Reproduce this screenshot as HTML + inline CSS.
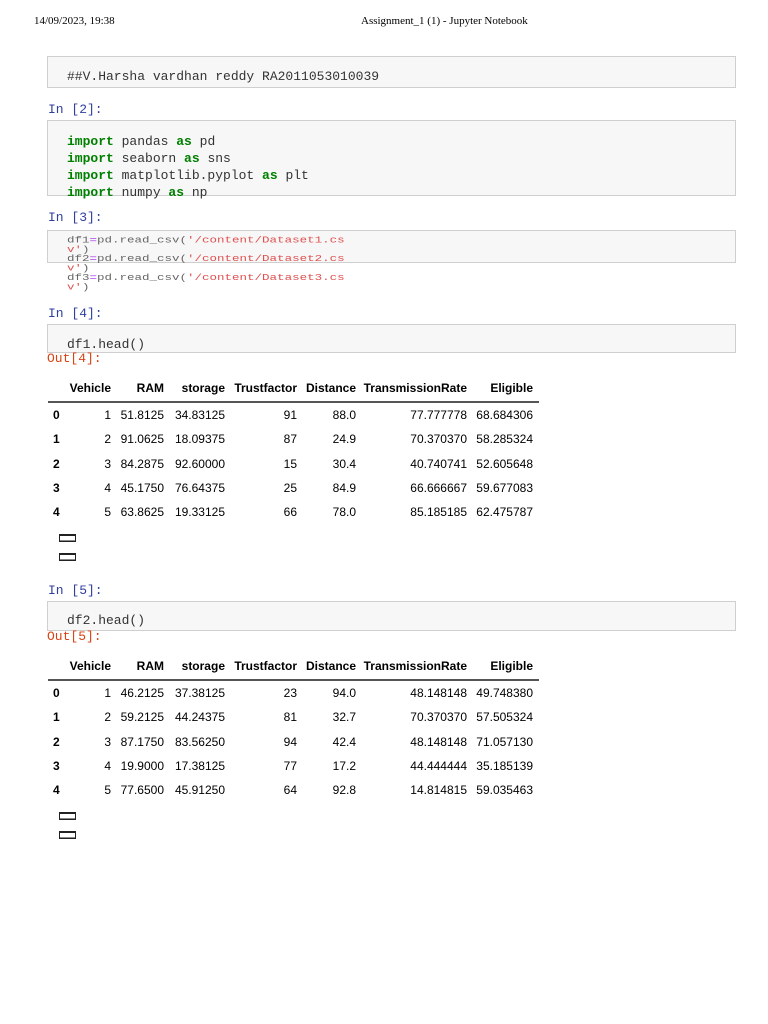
<!DOCTYPE html>
<html><head><meta charset="utf-8"><style>
body{margin:0;width:768px;height:1024px;background:#fff;position:relative;overflow:hidden;font-family:"Liberation Mono",monospace}
.a{position:absolute;white-space:pre}
.box{position:absolute;left:47px;width:689px;background:#f7f7f7;border:1px solid #cfcfcf;box-sizing:border-box}
.code{font-size:13px;color:#333}
.k{color:#008000;font-weight:bold}
.in{color:#303f9f;font-size:13px}
.out{color:#d84315;font-size:13px}
.t{font-family:"Liberation Sans",sans-serif;font-size:12px;color:#000;position:absolute;white-space:nowrap;text-align:right}
.h{font-weight:bold}
.ic{position:absolute;left:59px;width:15px;height:5px;border:1px solid #222;background:#fff;border-top-width:2px;box-shadow:inset 0 -1px 0 #888}
.sm{font-size:12.5px;color:#666}
.s{color:#e05050}
</style></head><body>
<div class="a" style="left:34px;top:15px;font-family:'Liberation Serif',serif;font-size:11px">14/09/2023, 19:38</div>
<div class="a" style="left:361px;top:15px;font-family:'Liberation Serif',serif;font-size:11px">Assignment_1 (1) - Jupyter Notebook</div>

<div class="box" style="top:56px;height:32px"></div>
<div class="a code" style="left:67px;top:69px">##V.Harsha vardhan reddy RA2011053010039</div>

<div class="a in" style="left:48px;top:102px">In [2]:</div>
<div class="box" style="top:120px;height:76px"></div>
<div class="a code" style="left:67px;top:133px;line-height:17px"><span class="k">import</span> pandas <span class="k">as</span> pd
<span class="k">import</span> seaborn <span class="k">as</span> sns
<span class="k">import</span> matplotlib.pyplot <span class="k">as</span> plt
<span class="k">import</span> numpy <span class="k">as</span> np</div>

<div class="a in" style="left:48px;top:210px">In [3]:</div>
<div class="box" style="top:230px;height:33px"></div>
<div class="a code sm" style="left:67px;top:236px;line-height:9.4px;transform:scaleY(0.72);transform-origin:0 0;line-height:13px">df1<span style="color:#a020f0">=</span>pd.read_csv(<span class="s">'/content/Dataset1.cs</span>
<span class="s">v'</span>)
df2<span style="color:#a020f0">=</span>pd.read_csv(<span class="s">'/content/Dataset2.cs</span>
<span class="s">v'</span>)
df3<span style="color:#a020f0">=</span>pd.read_csv(<span class="s">'/content/Dataset3.cs</span>
<span class="s">v'</span>)</div>

<div class="a in" style="left:48px;top:306px">In [4]:</div>
<div class="box" style="top:324px;height:29px"></div>
<div class="a code" style="left:67px;top:337px">df1.head()</div>
<div class="a out" style="left:47px;top:351px">Out[4]:</div>

<div class="a in" style="left:48px;top:583px">In [5]:</div>
<div class="box" style="top:601px;height:30px"></div>
<div class="a code" style="left:67px;top:613px">df2.head()</div>
<div class="a out" style="left:47px;top:629px">Out[5]:</div>

<div id="t1"></div><div id="t2"></div>
<div style="position:absolute;left:48px;top:401px;width:491px;height:2px;background:#555"></div>
<div style="position:absolute;left:48px;top:679px;width:491px;height:2px;background:#555"></div>
<div class="ic" style="top:534px"></div><div class="ic" style="top:553px"></div>
<div class="ic" style="top:812px"></div><div class="ic" style="top:831px"></div>
<script>
var R=[111,164,225,297,356,467,533];
var H=["Vehicle","RAM","storage","Trustfactor","Distance","TransmissionRate","Eligible"];
function tab(top,rows){var s="";
H.forEach(function(h,i){s+='<div class="t h" style="right:'+(768-R[i])+'px;top:'+(top)+'px">'+h+'</div>';});
rows.forEach(function(r,j){var y=top+27+j*24.3;
s+='<div class="t h" style="left:53px;top:'+y+'px">'+j+'</div>';
r.forEach(function(v,i){s+='<div class="t" style="right:'+(768-R[i])+'px;top:'+y+'px">'+v+'</div>';});});
return s;}
document.getElementById("t1").innerHTML=tab(381,[
["1","51.8125","34.83125","91","88.0","77.777778","68.684306"],
["2","91.0625","18.09375","87","24.9","70.370370","58.285324"],
["3","84.2875","92.60000","15","30.4","40.740741","52.605648"],
["4","45.1750","76.64375","25","84.9","66.666667","59.677083"],
["5","63.8625","19.33125","66","78.0","85.185185","62.475787"]]);
document.getElementById("t2").innerHTML=tab(659,[
["1","46.2125","37.38125","23","94.0","48.148148","49.748380"],
["2","59.2125","44.24375","81","32.7","70.370370","57.505324"],
["3","87.1750","83.56250","94","42.4","48.148148","71.057130"],
["4","19.9000","17.38125","77","17.2","44.444444","35.185139"],
["5","77.6500","45.91250","64","92.8","14.814815","59.035463"]]);
</script>
</body></html>
